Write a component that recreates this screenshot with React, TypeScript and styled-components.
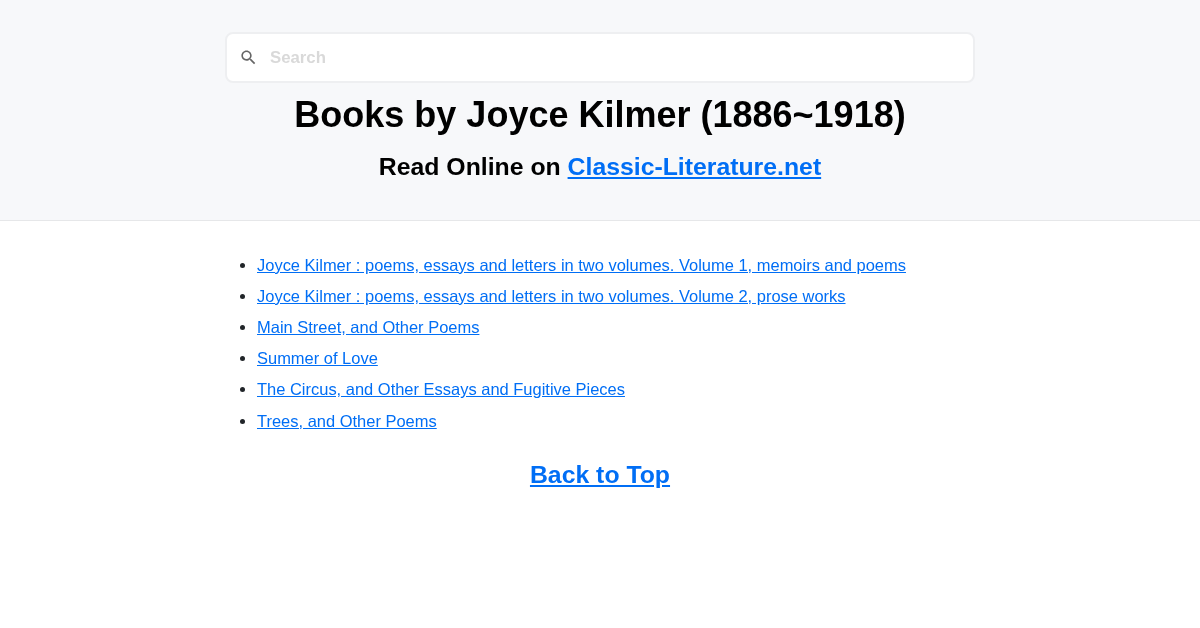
import React, { FC } from 'react'
import styled, { createGlobalStyle } from 'styled-components'

const BOOKS = [
  'Joyce Kilmer : poems, essays and letters in two volumes. Volume 1, memoirs and poems',
  'Joyce Kilmer : poems, essays and letters in two volumes. Volume 2, prose works',
  'Main Street, and Other Poems',
  'Summer of Love',
  'The Circus, and Other Essays and Fugitive Pieces',
  'Trees, and Other Poems',
]

const App: FC = () => {
  return (
    <>
      <GlobalStyle />
      <Header>
        <SearchBox>
          <SearchIcon viewBox="0 0 24 24" aria-hidden="true">
            <path d="M15.5 14h-.79l-.28-.27C15.41 12.59 16 11.11 16 9.5 16 5.91 13.09 3 9.5 3S3 5.91 3 9.5 5.91 16 9.5 16c1.61 0 3.09-.59 4.23-1.57l.27.28v.79l5 4.99L20.49 19l-4.99-5zm-6 0C7.01 14 5 11.99 5 9.5S7.01 5 9.5 5 14 7.01 14 9.5 11.99 14 9.5 14z" />
          </SearchIcon>
          <SearchInput placeholder="Search" />
        </SearchBox>
        <Title>Books by Joyce Kilmer (1886~1918)</Title>
        <Subtitle>
          Read Online on <a href="#site">Classic-Literature.net</a>
        </Subtitle>
      </Header>
      <Main>
        <BookList>
          {BOOKS.map((book) => (
            <BookItem key={book}>
              <a href="#book">{book}</a>
            </BookItem>
          ))}
        </BookList>
        <BackToTop>
          <a href="#top">Back to Top</a>
        </BackToTop>
      </Main>
    </>
  )
}

export default App

const GlobalStyle = createGlobalStyle`
  html, body {
    margin: 0;
    padding: 0;
    background: #fff;
  }

  body {
    font-family: "Liberation Sans", Arial, sans-serif;
    color: #212529;
  }

  #root {
    will-change: transform;
  }

  a {
    color: #006ef5;
    text-decoration: underline;
  }
`

const Header = styled.header`
  height: 221px;
  box-sizing: border-box;
  padding-top: 32px;
  background: #f7f8fa;
  border-bottom: 1px solid #e6e7e9;
  text-align: center;
`

const SearchBox = styled.div`
  width: 750px;
  height: 51px;
  box-sizing: border-box;
  margin: 0 auto;
  display: flex;
  align-items: center;
  gap: 12.4px;
  padding: 0 12px 0 11.6px;
  background: #fff;
  border: 2px solid #eeeff1;
  border-radius: 8px;
`

const SearchIcon = styled.svg`
  width: 19px;
  height: 19px;
  flex: none;
  fill: #666;
`

const SearchInput = styled.input`
  flex: 1;
  min-width: 0;
  border: 0;
  outline: 0;
  padding: 0;
  background: transparent;
  font: bold 16.8px "Liberation Sans", Arial, sans-serif;
  color: #212529;

  &::placeholder {
    color: #d9d9d9;
    opacity: 1;
  }
`

const Title = styled.h1`
  margin: 9px 0 0;
  font-size: 36px;
  line-height: 45px;
  font-weight: 700;
  color: #000;
`

const Subtitle = styled.h2`
  margin: 14px 0 0;
  font-size: 24.8px;
  line-height: 32px;
  font-weight: 700;
  color: #000;
`

const Main = styled.main`
  width: 750px;
  margin: 0 auto;
`

const BookList = styled.ul`
  margin: 0;
  padding: 28.6px 0 0 32px;
  list-style: disc;
`

const BookItem = styled.li`
  font-size: 16.48px;
  line-height: 31.2px;
`

const BackToTop = styled.h3`
  margin: 22.4px 0 0;
  text-align: center;
  font-size: 24.8px;
  line-height: 32px;
  font-weight: 700;
`
